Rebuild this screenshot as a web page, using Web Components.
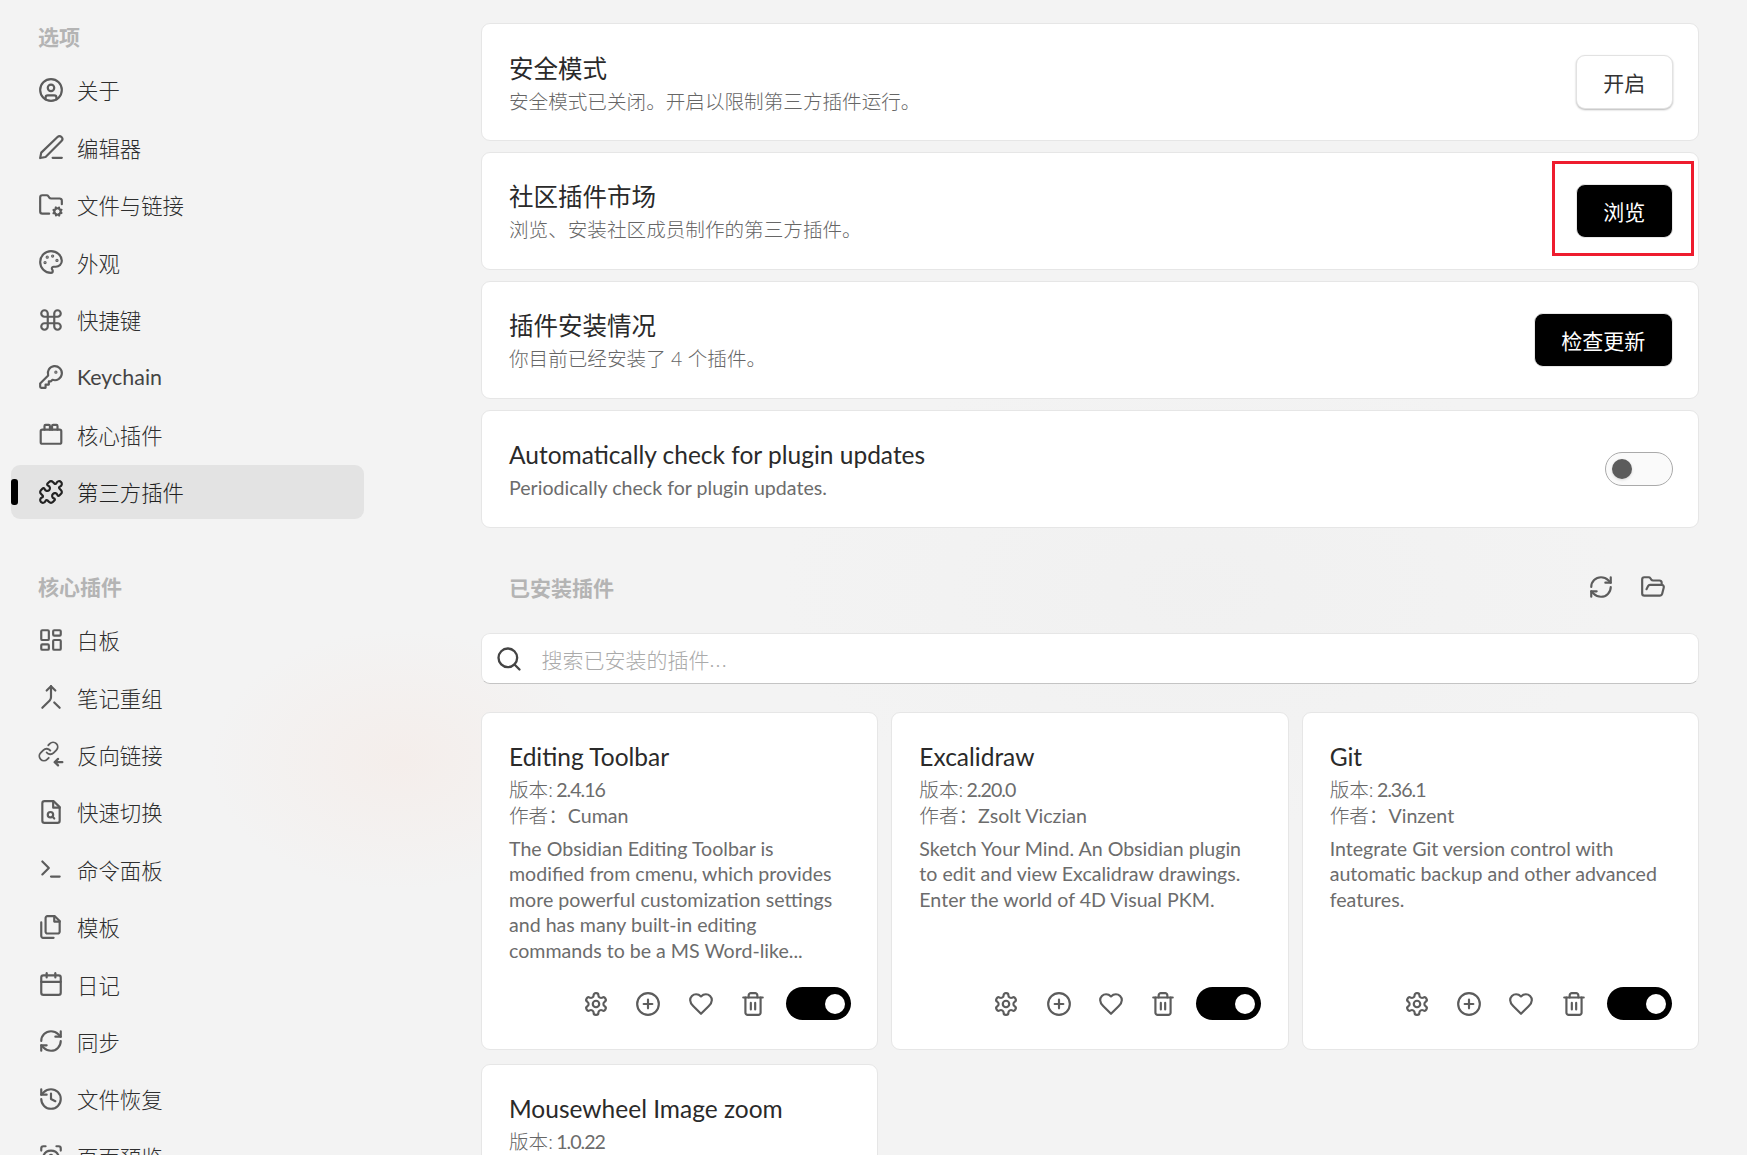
<!DOCTYPE html>
<html lang="zh-CN">
<head>
<meta charset="utf-8">
<title>设置</title>
<style>
html,body{margin:0;height:1155px;overflow:hidden}
body{
  background:
    radial-gradient(ellipse 190px 130px at 400px 760px,rgba(245,236,232,.75),rgba(245,236,232,0) 100%),
    radial-gradient(ellipse 420px 240px at 1200px 590px,rgba(238,238,238,.5),rgba(238,238,238,0) 100%),
    #f3f3f3;
  font-family:Lato,"Noto Sans CJK SC","Noto Sans",sans-serif;
  font-weight:300;color:#333;
  display:flex;align-items:flex-start;
}
.l{font-weight:400}
.s{font-weight:400;color:#6c6c6c}
.k{font-weight:400;color:#444}
.n{font-weight:400;letter-spacing:-1px;margin-left:-2px;color:#6c6c6c}
.dots{letter-spacing:1.2px}
</style>
</head>
<body>
<template id="t-nav-group">
  <style>
    :host{display:flex;flex-direction:column;gap:3.4px}
    h2{margin:0 0 9.6px 27px;font-family:inherit;font-size:21px;line-height:27px;font-weight:700;color:#b4b4b4}
  </style>
  <h2><slot name="title"></slot></h2>
  <slot></slot>
</template>
<template id="t-nav-item">
  <style>
    :host{display:flex;align-items:center;height:54px;border-radius:9px;position:relative;padding-left:27px;font-size:21.4px;font-weight:300;color:#2e2e2e}
    :host([active]){background:#e3e3e3;color:#222}
    :host([active])::before{content:"";position:absolute;left:0;top:14px;width:7px;height:26px;border-radius:3px;background:#000}
    x-icon{margin-right:13px;color:#5c5c5c}
    :host([active]) x-icon{color:#222}
  </style>
  <x-icon></x-icon><slot></slot>
</template>
<template id="t-setting-row">
  <style>
    :host{display:flex;justify-content:space-between;align-items:center;box-sizing:border-box;height:118.3px;background:#fff;border:1px solid #e6e6e6;border-radius:9px;padding:0 25.3px 0 27px}
    .t{font-size:24.5px;line-height:33px;color:#2a2a2a;font-weight:400}
    .d{font-size:19.6px;line-height:33px;color:#666}
    .txt{align-self:flex-start;padding-top:27.5px}
  </style>
  <div class="txt"><div class="t"><slot name="title"></slot></div><div class="d"><slot name="desc"></slot></div></div>
  <slot></slot>
</template>
<template id="t-x-button">
  <style>
    :host{display:inline-flex;align-items:center;justify-content:center;box-sizing:border-box;height:54px;padding:0 26.5px;border-radius:9px;font-size:21px;font-weight:400;background:#fff;color:#333;border:1px solid #e2e2e2;box-shadow:0 1px 2px rgba(0,0,0,.28)}
    :host([primary]){background:#000;color:#fff;border-color:#e8e8e8;box-shadow:none}
  </style>
  <slot></slot>
</template>
<template id="t-x-toggle">
  <style>
    :host{display:block;position:relative;box-sizing:border-box;width:68px;height:34.5px;border-radius:18px;background:#fafafa;border:1px solid #aaa}
    i{position:absolute;left:6.5px;top:6.5px;width:20px;height:20px;border-radius:50%;background:#5c5c5c;box-shadow:0 1px 3px rgba(0,0,0,.15)}
    :host([on]){width:65px;height:33px;background:#000;border:0}
    :host([on]) i{left:39px;top:6.5px;background:#fff;box-shadow:none}
  </style>
  <i></i>
</template>
<template id="t-highlight-box">
  <style>
    :host{display:inline-flex;position:relative}
    i{position:absolute;left:-23.7px;right:-21.3px;top:-23.3px;bottom:-18px;border:3.4px solid #ee1c2e;pointer-events:none}
  </style>
  <slot></slot><i></i>
</template>
<template id="t-section-head">
  <style>
    :host{display:flex;align-items:center;justify-content:space-between;box-sizing:border-box;height:105px;padding:14px 33px 0 28px}
    h2{margin:0;font-size:21px;font-weight:700;color:#b4b4b4}
    div{display:flex;gap:26px;color:#5c5c5c}
  </style>
  <h2><slot></slot></h2><div><slot name="actions"></slot></div>
</template>
<template id="t-search-box">
  <style>
    :host{display:flex;align-items:center;box-sizing:border-box;height:51.5px;background:#fff;border:1px solid #e6e6e6;border-bottom:1.5px solid #c4c4c4;border-radius:9px;padding-left:13px;font-size:21px;color:#aaa}
    x-icon{color:#444;margin-right:18.5px}
  </style>
  <x-icon name="search" size="28"></x-icon><slot></slot>
</template>
<template id="t-plugin-card">
  <style>
    :host{display:flex;flex-direction:column;box-sizing:border-box;height:338px;background:#fff;border:1px solid #e6e6e6;border-radius:9px;padding:27px 26.3px 28.5px 27px}
    .n{font-size:24.5px;line-height:33px;color:#2a2a2a}
    .m{margin-top:4.5px;font-size:19.6px;line-height:25.6px;color:#666}
    .d{margin-top:7px;font-size:19.6px;line-height:25.6px;color:#666}
    .a{margin-top:auto;display:flex;align-items:center;justify-content:flex-end;color:#5c5c5c}
  </style>
  <div class="n"><slot name="name"></slot></div>
  <div class="m"><slot name="version"></slot><br><slot name="author"></slot></div>
  <div class="d"><slot name="desc"></slot></div>
  <div class="a"><slot name="actions"></slot></div>
</template>
<template id="t-plugin-actions">
  <style>
    :host{display:flex;align-items:center}
    .i{display:flex;gap:26.4px;margin-right:20px;color:#5c5c5c}
  </style>
  <div class="i">
    <x-icon name="settings"></x-icon><x-icon name="plus"></x-icon><x-icon name="heart"></x-icon><x-icon name="trash"></x-icon>
  </div>
  <x-toggle on></x-toggle>
</template>
<template id="t-settings-sidebar">
  <style>
    :host{display:flex;flex-direction:column;flex:none;box-sizing:border-box;width:481px;padding:23px 117px 0 11px}
    ::slotted(nav-group:not(:first-child)){margin-top:54px}
  </style>
  <slot></slot>
</template>
<template id="t-settings-main">
  <style>
    :host{display:flex;flex-direction:column;flex:none;box-sizing:border-box;width:1218px;padding-top:23px}
    .rows{display:flex;flex-direction:column;gap:10.6px}
    .grid{display:grid;grid-template-columns:repeat(3,1fr);column-gap:13px;row-gap:14px;margin-top:27.5px}
  </style>
  <div class="rows"><slot name="rows"></slot></div>
  <slot name="head"></slot>
  <slot name="search"></slot>
  <div class="grid"><slot></slot></div>
</template>

<settings-sidebar>
  <nav-group>
    <span slot="title">选项</span>
    <nav-item icon="user">关于</nav-item>
    <nav-item icon="pen">编辑器</nav-item>
    <nav-item icon="foldercog">文件与链接</nav-item>
    <nav-item icon="palette">外观</nav-item>
    <nav-item icon="command">快捷键</nav-item>
    <nav-item icon="key"><span class="k">Keychain</span></nav-item>
    <nav-item icon="lego">核心插件</nav-item>
    <nav-item icon="puzzle" active>第三方插件</nav-item>
  </nav-group>
  <nav-group>
    <span slot="title">核心插件</span>
    <nav-item icon="dashboard">白板</nav-item>
    <nav-item icon="merge">笔记重组</nav-item>
    <nav-item icon="backlink">反向链接</nav-item>
    <nav-item icon="filesearch">快速切换</nav-item>
    <nav-item icon="terminal">命令面板</nav-item>
    <nav-item icon="files">模板</nav-item>
    <nav-item icon="calendar">日记</nav-item>
    <nav-item icon="refresh">同步</nav-item>
    <nav-item icon="history">文件恢复</nav-item>
    <nav-item icon="scaneye">页面预览</nav-item>
  </nav-group>
</settings-sidebar>

<settings-main>
  <setting-row slot="rows">
    <span slot="title">安全模式</span>
    <span slot="desc">安全模式已关闭。开启以限制第三方插件运行。</span>
    <x-button>开启</x-button>
  </setting-row>
  <setting-row slot="rows">
    <span slot="title">社区插件市场</span>
    <span slot="desc">浏览、安装社区成员制作的第三方插件。</span>
    <highlight-box><x-button primary>浏览</x-button></highlight-box>
  </setting-row>
  <setting-row slot="rows">
    <span slot="title">插件安装情况</span>
    <span slot="desc">你目前已经安装了 4 个插件。</span>
    <x-button primary>检查更新</x-button>
  </setting-row>
  <setting-row slot="rows">
    <span slot="title" class="l">Automatically check for plugin updates</span>
    <span slot="desc" class="s">Periodically check for plugin updates.</span>
    <x-toggle></x-toggle>
  </setting-row>

  <section-head slot="head">已安装插件
    <x-icon slot="actions" name="refresh"></x-icon>
    <x-icon slot="actions" name="folderopen"></x-icon>
  </section-head>
  <search-box slot="search">搜索已安装的插件<span class="dots">...</span></search-box>

  <plugin-card>
    <span slot="name" class="l">Editing Toolbar</span>
    <span slot="version">版本: <span class="n">2.4.16</span></span>
    <span slot="author">作者：<span class="s">Cuman</span></span>
    <span slot="desc" class="s">The Obsidian Editing Toolbar is modified from cmenu, which provides more powerful customization settings and has many built-in editing commands to be a MS Word-like...</span>
    <plugin-actions slot="actions"></plugin-actions>
  </plugin-card>
  <plugin-card>
    <span slot="name" class="l">Excalidraw</span>
    <span slot="version">版本: <span class="n">2.20.0</span></span>
    <span slot="author">作者：<span class="s">Zsolt Viczian</span></span>
    <span slot="desc" class="s">Sketch Your Mind. An Obsidian plugin to edit and view Excalidraw drawings. Enter the world of 4D Visual PKM.</span>
    <plugin-actions slot="actions"></plugin-actions>
  </plugin-card>
  <plugin-card>
    <span slot="name" class="l">Git</span>
    <span slot="version">版本: <span class="n">2.36.1</span></span>
    <span slot="author">作者：<span class="s">Vinzent</span></span>
    <span slot="desc" class="s">Integrate Git version control with automatic backup and other advanced features.</span>
    <plugin-actions slot="actions"></plugin-actions>
  </plugin-card>
  <plugin-card>
    <span slot="name" class="l">Mousewheel Image zoom</span>
    <span slot="version">版本: <span class="n">1.0.22</span></span>
  </plugin-card>
</settings-main>

<script>
const ICONS={
user:'<circle cx="12" cy="12" r="10"/><circle cx="12" cy="10" r="3"/><path d="M7 20.662V19a2 2 0 0 1 2-2h6a2 2 0 0 1 2 2v1.662"/>',
pen:'<path d="M13.5 22h8.5"/><path d="M18 2.8a2.6 2.6 0 0 1 3.7 3.7L7 21.2l-5 1 1-5Z"/>',
foldercog:'<circle cx="18" cy="18" r="3"/><path d="M10.3 20H4a2 2 0 0 1-2-2V5a2 2 0 0 1 2-2h3.9a2 2 0 0 1 1.69.9l.81 1.2a2 2 0 0 0 1.67.9H20a2 2 0 0 1 2 2v3.3"/><path d="m21.7 19.4-.9-.3"/><path d="m15.2 16.9-.9-.3"/><path d="m16.6 21.7.3-.9"/><path d="m19.1 15.2.3-.9"/><path d="m19.6 21.7-.4-1"/><path d="m16.8 15.3-.4-1"/><path d="m14.3 19.6 1-.4"/><path d="m20.7 16.8 1-.4"/>',
palette:'<circle cx="13.5" cy="6.5" r=".5" fill="currentColor"/><circle cx="17.5" cy="10.5" r=".5" fill="currentColor"/><circle cx="8.5" cy="7.5" r=".5" fill="currentColor"/><circle cx="6.5" cy="12.5" r=".5" fill="currentColor"/><path d="M12 2C6.5 2 2 6.5 2 12s4.5 10 10 10c.926 0 1.648-.746 1.648-1.688 0-.437-.18-.835-.437-1.125-.29-.289-.438-.652-.438-1.125a1.64 1.64 0 0 1 1.668-1.668h1.996c3.051 0 5.555-2.503 5.555-5.554C21.965 6.012 17.461 2 12 2z"/>',
command:'<path d="M15 6v12a3 3 0 1 0 3-3H6a3 3 0 1 0 3 3V6a3 3 0 1 0-3 3h12a3 3 0 1 0-3-3"/>',
key:'<path d="M2 18v3c0 .6.4 1 1 1h4v-3h3v-3h2l1.4-1.4a6.5 6.5 0 1 0-4-4Z"/><circle cx="16.5" cy="7.5" r=".5" fill="currentColor"/>',
lego:'<rect x="2.5" y="8" width="19" height="13" rx="1.5"/><path d="M6 8V4.5a1 1 0 0 1 1-1h3a1 1 0 0 1 1 1V8"/><path d="M13 8V4.5a1 1 0 0 1 1-1h3a1 1 0 0 1 1 1V8"/>',
puzzle:'<path d="M19.439 7.85c-.049.322.059.648.289.878l1.568 1.568c.47.47.706 1.087.706 1.704s-.235 1.233-.706 1.704l-1.611 1.611a.98.98 0 0 1-.837.276c-.47-.07-.802-.48-.968-.925a2.501 2.501 0 1 0-3.214 3.214c.446.166.855.497.925.968a.979.979 0 0 1-.276.837l-1.61 1.61a2.404 2.404 0 0 1-1.705.707 2.402 2.402 0 0 1-1.704-.706l-1.568-1.568a1.026 1.026 0 0 0-.877-.29c-.493.074-.84.504-1.02.968a2.5 2.5 0 1 1-3.237-3.237c.464-.18.894-.527.967-1.02a1.026 1.026 0 0 0-.289-.877l-1.568-1.568A2.402 2.402 0 0 1 1.998 12c0-.617.236-1.234.706-1.704L4.23 8.77c.24-.24.581-.353.917-.303.515.077.877.528 1.073 1.01a2.5 2.5 0 1 0 3.259-3.259c-.482-.196-.933-.558-1.01-1.073-.05-.336.062-.676.303-.917l1.525-1.525A2.402 2.402 0 0 1 12 1.998c.617 0 1.234.236 1.704.706l1.568 1.568c.23.23.556.338.877.29.493-.074.84-.504 1.02-.968a2.5 2.5 0 1 1 3.237 3.237c-.464.18-.894.527-.967 1.02Z"/>',
dashboard:'<rect x="3" y="3" width="7" height="9" rx="1"/><rect x="14" y="3" width="7" height="5" rx="1"/><rect x="14" y="12" width="7" height="9" rx="1"/><rect x="3" y="16" width="7" height="5" rx="1"/>',
merge:'<path d="m8 6 4-4 4 4"/><path d="M12 2v10.3a4 4 0 0 1-1.172 2.872L4 22"/><path d="m20 22-5-5"/>',
backlink:'<g transform="translate(-.5 -.5) scale(.85)"><path d="M10 13a5 5 0 0 0 7.54.54l3-3a5 5 0 0 0-7.07-7.07l-1.72 1.71"/><path d="M14 11a5 5 0 0 0-7.54-.54l-3 3a5 5 0 0 0 7.07 7.07l1.71-1.71"/></g><path d="M22.5 19.5h-7"/><path d="m18.5 16.5-3 3 3 3"/>',
filesearch:'<path d="M14.5 2H6a2 2 0 0 0-2 2v16a2 2 0 0 0 2 2h12a2 2 0 0 0 2-2V7.5L14.5 2z"/><path d="M14 2v6h6"/><circle cx="11.5" cy="14.5" r="2.5"/><path d="M13.25 16.25 15 18"/>',
terminal:'<path d="m4 17 6-6-6-6"/><path d="M12 19h8"/>',
files:'<path d="M15.5 2H8.6c-.4 0-.8.2-1.1.5-.3.3-.5.7-.5 1.1v12.8c0 .4.2.8.5 1.1.3.3.7.5 1.1.5h9.8c.4 0 .8-.2 1.1-.5.3-.3.5-.7.5-1.1V6.5L15.5 2z"/><path d="M3 7.6v12.8c0 .4.2.8.5 1.1.3.3.7.5 1.1.5h9.8"/><path d="M15 2v5h5"/>',
calendar:'<rect x="3" y="4" width="18" height="18" rx="2"/><path d="M16 2v4"/><path d="M8 2v4"/><path d="M3 10h18"/>',
refresh:'<path d="M3 12a9 9 0 0 1 9-9 9.75 9.75 0 0 1 6.74 2.74L21 8"/><path d="M21 3v5h-5"/><path d="M21 12a9 9 0 0 1-9 9 9.75 9.75 0 0 1-6.74-2.74L3 16"/><path d="M8 16H3v5"/>',
history:'<path d="M3 12a9 9 0 1 0 9-9 9.75 9.75 0 0 0-6.74 2.74L3 8"/><path d="M3 3v5h5"/><path d="M12 7v5l4 2"/>',
scaneye:'<path d="M3 7V5a2 2 0 0 1 2-2h2"/><path d="M17 3h2a2 2 0 0 1 2 2v2"/><path d="M21 17v2a2 2 0 0 1-2 2h-2"/><path d="M7 21H5a2 2 0 0 1-2-2v-2"/><circle cx="12" cy="12" r="1"/><path d="M18.944 12.33a1 1 0 0 0 0-.66 7.5 7.5 0 0 0-13.888 0 1 1 0 0 0 0 .66 7.5 7.5 0 0 0 13.888 0"/>',
folderopen:'<path d="m6 14 1.5-2.9A2 2 0 0 1 9.24 10H20a2 2 0 0 1 1.94 2.5l-1.54 6a2 2 0 0 1-1.95 1.5H4a2 2 0 0 1-2-2V5a2 2 0 0 1 2-2h3.9a2 2 0 0 1 1.69.9l.81 1.2a2 2 0 0 0 1.67.9H18a2 2 0 0 1 2 2v2"/>',
search:'<circle cx="11" cy="11" r="8"/><path d="m21 21-4.3-4.3"/>',
settings:'<path d="M12.22 2h-.44a2 2 0 0 0-2 2v.18a2 2 0 0 1-1 1.73l-.43.25a2 2 0 0 1-2 0l-.15-.08a2 2 0 0 0-2.73.73l-.22.38a2 2 0 0 0 .73 2.73l.15.1a2 2 0 0 1 1 1.72v.51a2 2 0 0 1-1 1.74l-.15.09a2 2 0 0 0-.73 2.73l.22.38a2 2 0 0 0 2.73.73l.15-.08a2 2 0 0 1 2 0l.43.25a2 2 0 0 1 1 1.73V20a2 2 0 0 0 2 2h.44a2 2 0 0 0 2-2v-.18a2 2 0 0 1 1-1.73l.43-.25a2 2 0 0 1 2 0l.15.08a2 2 0 0 0 2.73-.73l.22-.39a2 2 0 0 0-.73-2.73l-.15-.08a2 2 0 0 1-1-1.74v-.5a2 2 0 0 1 1-1.74l.15-.09a2 2 0 0 0 .73-2.73l-.22-.38a2 2 0 0 0-2.73-.73l-.15.08a2 2 0 0 1-2 0l-.43-.25a2 2 0 0 1-1-1.73V4a2 2 0 0 0-2-2z"/><circle cx="12" cy="12" r="3"/>',
plus:'<circle cx="12" cy="12" r="10"/><path d="M8 12h8"/><path d="M12 8v8"/>',
heart:'<path d="M19 14c1.49-1.46 3-3.21 3-5.5A5.5 5.5 0 0 0 16.5 3c-1.76 0-3 .5-4.5 2-1.5-1.5-2.74-2-4.5-2A5.5 5.5 0 0 0 2 8.5c0 2.3 1.5 4.05 3 5.5l7 7Z"/>',
trash:'<path d="M3 6h18"/><path d="M19 6v14c0 1-1 2-2 2H7c-1 0-2-1-2-2V6"/><path d="M8 6V4c0-1 1-2 2-2h4c1 0 2 1 2 2v2"/><path d="M10 11v6"/><path d="M14 11v6"/>'
};
class XIcon extends HTMLElement{
  static get observedAttributes(){return['name','size']}
  constructor(){super();this.attachShadow({mode:'open'})}
  connectedCallback(){this.render()}
  attributeChangedCallback(){this.render()}
  render(){
    const s=this.getAttribute('size')||26;
    this.shadowRoot.innerHTML=`<style>:host{display:inline-flex;flex:none;width:${s}px;height:${s}px}svg{display:block;width:100%;height:100%}</style><svg viewBox="0 0 24 24" fill="none" stroke="currentColor" stroke-width="2" stroke-linecap="round" stroke-linejoin="round">${ICONS[this.getAttribute('name')]||''}</svg>`;
  }
}
customElements.define('x-icon',XIcon);
function simple(tag){
  customElements.define(tag,class extends HTMLElement{
    constructor(){super();this.attachShadow({mode:'open'}).appendChild(document.getElementById('t-'+tag).content.cloneNode(true))}
  });
}
['nav-group','setting-row','x-button','x-toggle','highlight-box','section-head','search-box','plugin-card','plugin-actions','settings-sidebar','settings-main'].forEach(simple);
customElements.define('nav-item',class extends HTMLElement{
  constructor(){super();this.attachShadow({mode:'open'}).appendChild(document.getElementById('t-nav-item').content.cloneNode(true))}
  connectedCallback(){this.shadowRoot.querySelector('x-icon').setAttribute('name',this.getAttribute('icon'))}
});
</script>
</body>
</html>
